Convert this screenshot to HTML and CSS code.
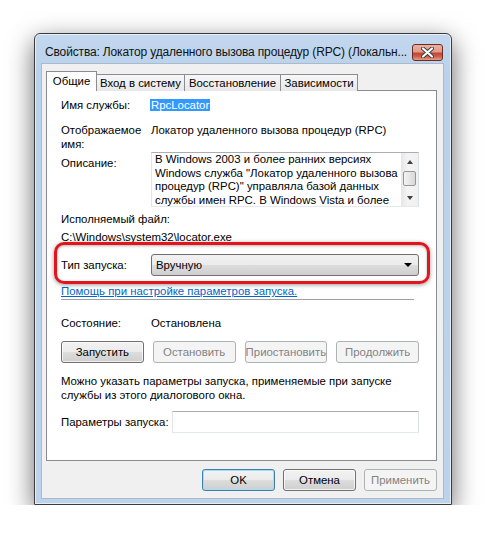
FILE: index.html
```html
<!DOCTYPE html>
<html lang="ru">
<head>
  <meta charset="UTF-8" />
  <title>Свойства: Локатор удаленного вызова процедур (RPC)</title>
  <link rel="stylesheet" href="styles.css">
</head>
<body>
  <div class="window">
    <div class="titlebar">
      <span class="title">Свойства: Локатор удаленного вызова процедур (RPC) (Локальн...</span>
      <div class="close">
        <svg width="13" height="11" viewBox="0 0 13 11">
          <path d="M2 1.5 L11 9.5 M11 1.5 L2 9.5" stroke="#3b3b3b" stroke-width="4" stroke-linecap="round" />
          <path d="M2 1.5 L11 9.5 M11 1.5 L2 9.5" stroke="#fff" stroke-width="2.2" stroke-linecap="round" />
        </svg>
      </div>
    </div>

    <div class="client">
      <!-- вкладки -->
      <div class="tabs">
        <div class="tab active">Общие</div>
        <div class="tab t2">Вход в систему</div>
        <div class="tab t3">Восстановление</div>
        <div class="tab t4">Зависимости</div>
      </div>

      <div class="panel">
        <div class="row name-row">
          <span>Имя службы:</span>
          <span><span class="sel">RpcLocator</span></span>
        </div>
        <div class="row disp-row">
          <span>Отображаемое<br>имя:</span>
          <span>Локатор удаленного вызова процедур (RPC)</span>
        </div>
        <div class="row desc-row">
          <span class="desc-label">Описание:</span>
          <div class="desc">
            <div class="desc-text">В Windows 2003 и более ранних версиях<br>Windows служба "Локатор удаленного вызова<br>процедур (RPC)" управляла базой данных<br>службы имен RPC. В Windows Vista и более</div>
            <div class="scroll">
              <div class="sb-btn"><span class="arr up"></span></div>
              <div class="thumb"></div>
              <div class="sb-track"></div>
              <div class="sb-btn"><span class="arr down"></span></div>
            </div>
          </div>
        </div>
        <div class="line exe-label">Исполняемый файл:</div>
        <div class="line exe-path">C:\Windows\system32\locator.exe</div>

        <div class="row combo-row">
          <span>Тип запуска:</span>
          <div class="combo"><span>Вручную</span><span class="arr down dark"></span></div>
        </div>
        <a class="help" href="#">Помощь при настройке параметров запуска.</a>
        <div class="sep"></div>

        <div class="row state-row">
          <span>Состояние:</span>
          <span>Остановлена</span>
        </div>
        <div class="svc-buttons">
          <div class="btn">Запустить</div>
          <div class="btn off">Остановить</div>
          <div class="btn off">Приостановить</div>
          <div class="btn off">Продолжить</div>
        </div>
        <div class="note">Можно указать параметры запуска, применяемые при запуске<br>службы из этого диалогового окна.</div>
        <div class="row params-row">
          <span>Параметры запуска:</span>
          <div class="textbox"></div>
        </div>

        <!-- красная рамка-выделение поверх -->
        <div class="callout"></div>
      </div>

      <div class="actions">
        <div class="btn default">OK</div>
        <div class="btn">Отмена</div>
        <div class="btn off">Применить</div>
      </div>
    </div>
  </div>
</body>
</html>
```

FILE: styles.css
```css
body {
  margin: 0;
  padding: 33px 0 0 34px;
  background: #fff;
  font-family: "Liberation Sans", Arial, sans-serif;
  font-size: 11.4px;
  color: #000;
}

.window {
  width: 418px;
  height: 472px;
  box-sizing: border-box;
  border: 1px solid #3c3c3c;
  border-radius: 6px 6px 0 0;
  background: linear-gradient(#c3d8ef, #b9d1ea 40px, #bdd3eb);
  box-shadow: 0 8px 26px rgba(0, 0, 0, 0.6), inset 0 0 0 1px rgba(255, 255, 255, 0.6);
  display: flex;
  flex-direction: column;
  padding: 0 7px 5px 6px;
}

.titlebar {
  height: 29px;
  flex: none;
  box-sizing: border-box;
  display: flex;
  align-items: flex-end;
  justify-content: space-between;
  padding: 0 1px 2px 4px;
}
.title {
  font-size: 12px;
  line-height: 16px;
  padding-bottom: 1px;
  white-space: nowrap;
  letter-spacing: -0.15px;
  color: #111;
}
.close {
  width: 31px;
  height: 17px;
  flex: none;
  box-sizing: border-box;
  border: 1px solid #6e2b23;
  border-radius: 3px;
  background: linear-gradient(#eab0a2, #e29a88 45%, #c4453a 55%, #cd5b48 75%, #e2a184);
  display: flex;
  align-items: center;
  justify-content: center;
}

.client {
  flex: 1;
  background: #f0f0f0;
  border: 1px solid #a9bacd;
  padding: 7px 6px 0 4px;
  display: flex;
  flex-direction: column;
}

/* вкладки */
.tabs {
  display: flex;
  align-items: flex-end;
  height: 20px;
  margin-bottom: -1px;
  position: relative;
  z-index: 1;
}
.tab {
  height: 17px;
  box-sizing: border-box;
  border: 1px solid #898c95;
  border-bottom: none;
  background: linear-gradient(#f7f7f7, #e8e8e8);
  line-height: 16px;
  text-align: center;
  margin-left: -1px;
}
.tab.active {
  width: 51px;
  height: 20px;
  margin-left: 0;
  background: #fff;
  line-height: 19px;
  position: relative;
  z-index: 2;
}
.t2 { width: 89px; }
.t3 { width: 97px; }
.t4 { width: 78px; }

.panel {
  height: 371px;
  flex: none;
  box-sizing: border-box;
  border: 1px solid #898c95;
  background: #fff;
  padding: 6px 17px 0 14px;
  position: relative;
}

.row {
  display: grid;
  grid-template-columns: 90px 1fr;
  line-height: 14px;
}
.name-row { line-height: 16px; }
.sel {
  background: #3399ff;
  color: #fff;
  padding: 0 1px 0 1px;
  margin-left: -1px;
}
.disp-row { margin-top: 10px; }
.desc-row { margin-top: 1px; }
.desc-label { padding-top: 4px; }
.desc {
  height: 55px;
  box-sizing: border-box;
  border: 1px solid;
  border-color: #abadb3 #dbdfe6 #e3e9ef #e2e3ea;
  display: flex;
  overflow: hidden;
}
.desc-text {
  flex: 1;
  padding: 0 2px 0 3px;
  line-height: 13.5px;
  white-space: nowrap;
  overflow: hidden;
}
.scroll {
  width: 17px;
  flex: none;
  display: flex;
  flex-direction: column;
  align-items: center;
  background: linear-gradient(90deg, #e6e6e6, #f4f4f4 40%, #f0f0f0);
}
.sb-btn {
  height: 17px;
  width: 17px;
  display: flex;
  align-items: center;
  justify-content: center;
}
.sb-track { flex: 1; }
.thumb {
  width: 13px;
  height: 15px;
  margin-top: 1px;
  box-sizing: border-box;
  border: 1px solid #979797;
  border-radius: 2px;
  background: linear-gradient(90deg, #f3f3f3, #e6e6e6 50%, #d8d8d8);
}
.arr {
  width: 0;
  height: 0;
  border-left: 3px solid transparent;
  border-right: 3px solid transparent;
}
.arr.up { border-bottom: 4px solid #404040; }
.arr.down { border-top: 4px solid #404040; }
.arr.dark {
  border-left-width: 4px;
  border-right-width: 4px;
  border-top: 4px solid #000;
}

.line { line-height: 14px; }
.exe-label { margin-top: 5px; }
.exe-path { margin-top: 4px; }

.combo-row {
  margin-top: 10px;
  align-items: center;
}
.combo {
  height: 22px;
  box-sizing: border-box;
  border: 1px solid #707070;
  border-radius: 3px;
  background: linear-gradient(#f2f2f2, #ebebeb 50%, #dddddd 50%, #cfcfcf);
  display: flex;
  align-items: center;
  justify-content: space-between;
  padding: 0 6px 0 4px;
}

.help {
  display: block;
  margin-top: 8px;
  line-height: 14px;
  color: #0066cc;
  text-decoration: underline;
}
.sep {
  margin-top: 1px;
  height: 1px;
  width: 353px;
  background: #a0a0a0;
}

.state-row { margin-top: 16px; }

.svc-buttons {
  margin-top: 11px;
  display: grid;
  grid-template-columns: repeat(4, 1fr);
  gap: 9px;
}

.btn {
  height: 22px;
  box-sizing: border-box;
  border: 1px solid #707070;
  border-radius: 3px;
  background: linear-gradient(#f2f2f2, #ebebeb 50%, #dddddd 50%, #cfcfcf);
  box-shadow: inset 0 0 0 1px rgba(255, 255, 255, 0.7);
  display: flex;
  align-items: center;
  justify-content: center;
}
.btn.off {
  color: #838383;
  border-color: #adb2b5;
  background: #f4f4f4;
  box-shadow: none;
}
.btn.default {
  border-color: #3c7fb1;
  box-shadow: inset 0 0 0 1px #a6dcf8;
}

.note {
  margin-top: 11px;
  line-height: 14px;
}

.params-row {
  margin-top: 9px;
  grid-template-columns: 111px 1fr;
  align-items: center;
}
.textbox {
  height: 22px;
  box-sizing: border-box;
  border: 1px solid;
  border-color: #abadb3 #dbdfe6 #e3e9ef #e2e3ea;
}

.callout {
  position: absolute;
  left: 7px;
  top: 151px;
  width: 376px;
  height: 42px;
  box-sizing: border-box;
  border: 3px solid #e2141c;
  border-radius: 10px;
  box-shadow: 0 1px 4px rgba(0, 0, 0, 0.4), inset 0 1px 3px rgba(0, 0, 0, 0.3);
}

.actions {
  margin-top: 8px;
  display: flex;
  justify-content: flex-end;
  gap: 8px;
}
.actions .btn {
  width: 73px;
  height: 22px;
}
```
